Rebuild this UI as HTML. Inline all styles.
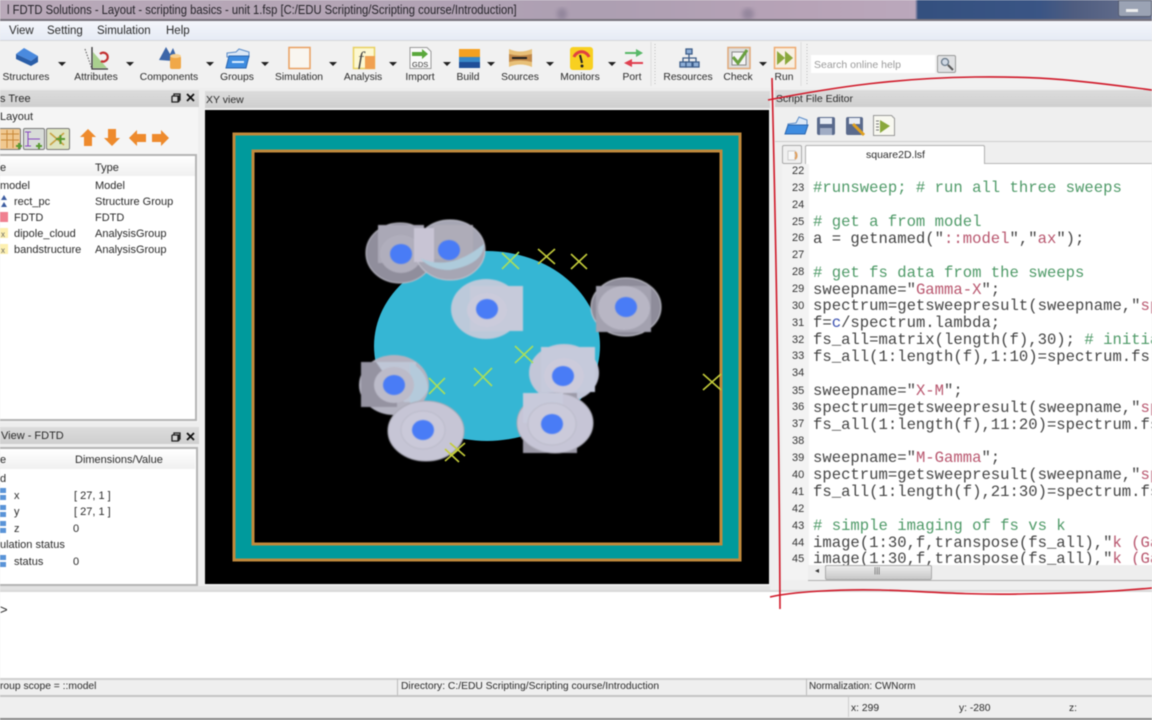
<!DOCTYPE html>
<html><head><meta charset="utf-8"><style>
html,body{margin:0;padding:0;width:1152px;height:720px;overflow:hidden;background:#f0f0f0}
#r{position:relative;width:1152px;height:720px;overflow:hidden;font-family:"Liberation Sans",sans-serif;font-size:11px;color:#2a2a2a;filter:blur(.45px)}
.a{position:absolute}
.t{position:absolute;white-space:nowrap;line-height:14px}
.c{transform:translateX(-50%);font-size:10.300px}
.h{position:absolute;background:linear-gradient(#dcdcdc,#cfcfcf);height:17px}
.l{position:absolute;left:813px;white-space:pre;font-family:"Liberation Mono",monospace;font-size:15.6px;line-height:17px;color:#444}
.n{position:absolute;left:792px;width:13px;font-size:11px;line-height:12px;color:#333}
.g{color:#4f9a68}.s{color:#b8566e}.b{color:#3a50b0}
</style></head><body><div id="r">

<!-- title bar -->
<div class="a" style="left:0;top:0;width:1152px;height:20px;background:linear-gradient(90deg,#b9a9b9 0,#b5a6b6 300px,#ad9fb2 600px,#b7a3b7 800px,#bba8bc 915px,#34507f 918px,#3a5585 1040px,#4f5d80 1075px,#6a7390 1152px)"></div>
<svg class="a" style="left:0;top:0" width="1152" height="20"><defs><filter id="sp"><feGaussianBlur stdDeviation="2.500"/></filter></defs><g fill="#7a7088" opacity=".55" filter="url(#sp)"><ellipse cx="562" cy="14" rx="5" ry="6"/><ellipse cx="748" cy="14" rx="6" ry="6"/></g></svg>
<div class="a" style="left:0;top:19px;width:1152px;height:2px;background:#77727c"></div>
<div class="a" style="left:1118px;top:0;width:34px;height:17px;background:#9ba3b4;border:1px solid #555c70;border-radius:0 0 3px 3px;box-sizing:border-box"></div>
<div class="a" style="left:1126px;top:9px;width:12px;height:3px;background:#eee"></div>
<div class="t" style="left:7px;top:3px;font-size:12.6px;color:#26242a;transform:scaleX(.89);transform-origin:0 0">l FDTD Solutions - Layout - scripting basics - unit 1.fsp [C:/EDU Scripting/Scripting course/Introduction]</div>

<!-- menu -->
<div class="a" style="left:0;top:21px;width:1152px;height:19px;background:linear-gradient(#f4f6fb,#e6ebf5)"></div>
<div class="t" style="left:9px;top:24px;font-size:11.5px">View</div>
<div class="t" style="left:47px;top:24px;font-size:11.5px">Setting</div>
<div class="t" style="left:97px;top:24px;font-size:11.5px">Simulation</div>
<div class="t" style="left:166px;top:24px;font-size:11.5px">Help</div>

<!-- toolbar -->
<div class="a" style="left:0;top:40px;width:1152px;height:48px;background:#f1f1f1;border-top:1px solid #d4d6da;box-sizing:border-box"></div>
<div class="t c" style="left:26px;top:71px">Structures</div>
<div class="t c" style="left:96px;top:71px">Attributes</div>
<div class="t c" style="left:169px;top:71px">Components</div>
<div class="t c" style="left:237px;top:71px">Groups</div>
<div class="t c" style="left:299px;top:71px">Simulation</div>
<div class="t c" style="left:363px;top:71px">Analysis</div>
<div class="t c" style="left:420px;top:71px">Import</div>
<div class="t c" style="left:468px;top:71px">Build</div>
<div class="t c" style="left:520px;top:71px">Sources</div>
<div class="t c" style="left:580px;top:71px">Monitors</div>
<div class="t c" style="left:632px;top:71px">Port</div>
<div class="t c" style="left:688px;top:71px">Resources</div>
<div class="t c" style="left:738px;top:71px">Check</div>
<div class="t c" style="left:784px;top:71px">Run</div>

<svg class="a" style="left:0;top:40px" width="1152" height="50" viewBox="0 40 1152 50">
<g fill="#222"><path d="M58 62h8l-4 4zM126 62h8l-4 4zM206 62h8l-4 4zM261 62h8l-4 4zM329 62h8l-4 4zM389 62h8l-4 4zM443 62h8l-4 4zM487 62h8l-4 4zM546 62h8l-4 4zM608 62h8l-4 4zM759 62h8l-4 4z"/></g>
<!-- structures -->
<path d="M16 54l8-6 14 8-7 5z" fill="#4a8ade"/><path d="M16 54l15 7 7-5v6l-7 4-15-7z" fill="#2a5ea8"/>
<!-- attributes -->
<path d="M92 47v22h16" fill="none" stroke="#333" stroke-width="1.300"/><path d="M93 52l14 16H93z" fill="#a9d08e"/><path d="M85 49l7 20" stroke="#555" stroke-width="1" stroke-dasharray="1.5 1.5"/><path d="M100 54a4.500 4.500 0 1 1 1 7" fill="none" stroke="#c23030" stroke-width="2.200"/>
<!-- components -->
<path d="M159 60l7-13 4 7 3-6 4 10-4 3z" fill="#3c66a8"/><rect x="170" y="56" width="11" height="13" rx="2" fill="#f0a848"/><ellipse cx="175.500" cy="56" rx="5.500" ry="2" fill="#f8d090"/>
<!-- groups folder -->
<path d="M227 53l9-1 3-3 10 3v5h-22z" fill="#dce8f6" stroke="#5b8cc8"/><path d="M229 56h20l-3 12h-20z" fill="#3e8ce0" stroke="#2a66b0"/><path d="M232 62h12" stroke="#d8ecff" stroke-width="2"/>
<!-- simulation -->
<rect x="289" y="47.500" width="21" height="21" fill="#f9f6f0" stroke="#eaa060" stroke-width="1.500"/>
<!-- analysis -->
<rect x="353.500" y="47.500" width="21" height="21" fill="#fdf8d0" stroke="#e8d060" stroke-width="1.500"/><rect x="365" y="56" width="10" height="13" fill="#f0a050"/><text x="358" y="65" font-family="Liberation Serif" font-style="italic" font-size="19" fill="#444">f</text>
<!-- import -->
<path d="M410 47.500h17l4 4v17h-21z" fill="#fafafa" stroke="#999"/><path d="M412 52h10v-3l6 5-6 5v-3h-10z" fill="#5aa83c"/><text x="412" y="67" font-family="Liberation Sans" font-size="7.500" fill="#333">GDS</text>
<!-- build -->
<rect x="459" y="49" width="21" height="8" fill="#f4a020"/><rect x="459" y="57" width="21" height="5" fill="#3888c8"/><rect x="459" y="62" width="21" height="6" fill="#1f4e98"/>
<!-- sources -->
<path d="M509 49q11 5 23 0v18q-12-5-23 0z" fill="#e8c078"/><path d="M509 54q11 3 23 0v8q-12-3-23 0z" fill="#c08848"/><path d="M512 58h15" stroke="#222" stroke-width="2"/>
<!-- monitors -->
<rect x="570" y="47" width="23" height="23" rx="3" fill="#f8d020"/><path d="M574 57a8 8 0 0 1 15 0" fill="none" stroke="#e04040" stroke-width="3"/><path d="M580 55l2 8" stroke="#222" stroke-width="2"/><circle cx="582" cy="66" r="1.500" fill="#222"/>
<!-- port -->
<path d="M625 52h11v-3l7 4-7 4v-3h-11z" fill="#58b868"/><path d="M643 62h-11v-3l-8 4 8 4v-3h11z" fill="#e04050"/>
<!-- resources -->
<g fill="none" stroke="#3c5c88" stroke-width="1.300"><rect x="686" y="49" width="6" height="5" fill="#8fb0d8"/><rect x="680" y="62" width="6" height="5" fill="#8fb0d8"/><rect x="686" y="62" width="6" height="5" fill="#8fb0d8"/><rect x="693" y="62" width="6" height="5" fill="#8fb0d8"/><path d="M689 54v4M683 62v-4h13v4M689 58v4"/></g>
<!-- check -->
<rect x="728" y="47.500" width="22" height="21" fill="#ddd" stroke="#e0a878" stroke-width="1.500"/><rect x="732" y="52" width="14" height="13" fill="#f4f4f4" stroke="#888"/><path d="M733 57l5 6 9-13" fill="none" stroke="#6aa040" stroke-width="3"/>
<!-- run -->
<rect x="774.500" y="47.500" width="21" height="21" fill="#f7f0e2" stroke="#eeaa70" stroke-width="1.500"/><path d="M777 51l8 7-8 7zM785 51l8 7-8 7z" fill="#8aa83c"/>
<!-- separators -->
<path d="M655 44v40M807 44v40" stroke="#bbb" stroke-dasharray="1 2"/><path d="M651 42v44" stroke="#ddd"/><path d="M801 42v44" stroke="#ddd"/>
</svg>

<!-- search -->
<div class="a" style="left:811px;top:55px;width:124px;height:18px;background:#fff"></div>
<div class="t" style="left:814px;top:58px;font-size:10.500px;color:#9a9a9a">Search online help</div>
<div class="a" style="left:937px;top:55px;width:19px;height:18px;box-sizing:border-box;background:#dfe0e2;border:1px solid #9a9a9a;border-radius:2px"></div>
<svg class="a" style="left:937px;top:55px" width="20" height="19"><circle cx="8" cy="7" r="3.500" fill="#cfd8e4" stroke="#6a7a8a" stroke-width="1.300"/><path d="M11 10l5 5" stroke="#555" stroke-width="2"/></svg>

<!-- dock bg -->
<div class="a" style="left:0;top:88px;width:1152px;height:504px;background:#eeeeee"></div>

<!-- left panel top -->
<div class="h" style="left:0;top:90px;width:199px"></div>
<div class="t" style="left:0;top:92px;font-size:11px">s Tree</div>
<div class="a" style="left:0;top:107px;width:198px;height:315px;background:#f5f5f5"></div>
<div class="t" style="left:0;top:110px">Layout</div>
<div class="a" style="left:-4px;top:128px;width:25px;height:22px;box-sizing:border-box;background:#f0c890;border:1px solid #777;border-radius:2px"></div>
<div class="a" style="left:23px;top:128px;width:22px;height:22px;box-sizing:border-box;background:#d8dcd8;border:1px solid #777;border-radius:2px"></div>
<div class="a" style="left:46px;top:128px;width:24px;height:22px;box-sizing:border-box;background:#dfe4c0;border:1px solid #777;border-radius:2px"></div>
<svg class="a" style="left:0;top:126px" width="180" height="26" viewBox="0 126 180 26">
<path d="M1 134h18M1 140h18M7 130v18M13 130v18" stroke="#c88838"/><path d="M16 146h6M19 143v6" stroke="#5a9a30" stroke-width="2"/>
<path d="M28 132v14M28 139h12M25 132h6M25 146h6" stroke="#8848c0"/><path d="M36 146h6M39 143v6" stroke="#5a9a30" stroke-width="2"/>
<path d="M50 133l14 12M64 133l-14 12" stroke="#c8a040" stroke-width="1.500"/><path d="M56 139h9M60.500 135v9" stroke="#5a9a30" stroke-width="2"/>
<g fill="#ee8a2c"><path d="M88 129l8 8h-4v9h-8v-9h-4z"/><path d="M112 146l8-8h-4v-9h-8v9h-4z"/><path d="M129 138l8-8v4h9v8h-9v4z"/><path d="M169 138l-8-8v4h-9v8h9v4z"/></g>
</svg>
<div class="a" style="left:0;top:154px;width:197px;height:267px;background:#fff;border-right:2px solid #b4b4b4;border-top:2px solid #b4b4b4;border-bottom:2px solid #b4b4b4;box-sizing:border-box"></div>
<div class="a" style="left:0;top:156px;width:195px;height:20px;background:linear-gradient(#fff,#f0f0f0)"></div>
<div class="t" style="left:0;top:161px">e</div><div class="t" style="left:95px;top:161px">Type</div>
<div class="t" style="left:0;top:179px">model</div><div class="t" style="left:95px;top:179px">Model</div>
<div class="t" style="left:14px;top:195px">rect_pc</div><div class="t" style="left:95px;top:195px">Structure Group</div>
<div class="t" style="left:14px;top:211px">FDTD</div><div class="t" style="left:95px;top:211px">FDTD</div>
<div class="t" style="left:14px;top:227px">dipole_cloud</div><div class="t" style="left:95px;top:227px">AnalysisGroup</div>
<div class="t" style="left:14px;top:243px">bandstructure</div><div class="t" style="left:95px;top:243px">AnalysisGroup</div>
<svg class="a" style="left:0;top:194px" width="12" height="64" viewBox="0 194 12 64">
<path d="M4 195l3 5H1zM4 202l3 5H1z" fill="#3c5ca0"/><rect x="0" y="212" width="8" height="10" fill="#f08090"/><rect x="0" y="228" width="8" height="10" fill="#fdf0b0"/><rect x="0" y="244" width="8" height="10" fill="#fdf0b0"/><text x="1" y="237" font-size="8" fill="#666">x</text><text x="1" y="253" font-size="8" fill="#666">x</text>
</svg>

<!-- left panel bottom -->
<div class="h" style="left:0;top:427px;width:199px"></div>
<div class="t" style="left:1px;top:429px">View - FDTD</div>
<div class="a" style="left:0;top:447px;width:198px;height:139px;background:#fff;border-right:2px solid #b4b4b4;border-top:2px solid #b4b4b4;border-bottom:2px solid #b4b4b4;box-sizing:border-box"></div>
<div class="a" style="left:0;top:449px;width:195px;height:20px;background:linear-gradient(#fff,#f0f0f0)"></div>
<div class="t" style="left:0;top:453px">e</div><div class="t" style="left:75px;top:453px">Dimensions/Value</div>
<div class="t" style="left:0;top:472px">d</div>
<div class="t" style="left:14px;top:489px">x</div><div class="t" style="left:74px;top:489px">[ 27, 1 ]</div>
<div class="t" style="left:14px;top:505px">y</div><div class="t" style="left:74px;top:505px">[ 27, 1 ]</div>
<div class="t" style="left:14px;top:522px">z</div><div class="t" style="left:73px;top:522px">0</div>
<div class="t" style="left:0;top:538px">ulation status</div>
<div class="t" style="left:14px;top:555px">status</div><div class="t" style="left:73px;top:555px">0</div>
<svg class="a" style="left:0;top:486px" width="8" height="82" viewBox="0 486 8 82"><g fill="#5a94d8"><rect y="488" width="6" height="5"/><rect y="495" width="6" height="5"/><rect y="505" width="6" height="5"/><rect y="512" width="6" height="5"/><rect y="521" width="6" height="5"/><rect y="528" width="6" height="5"/><rect y="555" width="6" height="5"/><rect y="562" width="6" height="5"/></g></svg>

<!-- dock buttons -->
<svg class="a" style="left:0;top:88px" width="770" height="360">
<g fill="none" stroke="#222" stroke-width="1.300"><path d="M172 8h7v6M174 8V6h6v6h-2M172 8v6h6V8"/><path d="M742 8h7v6M744 8V6h6v6h-2M742 8v6h6V8"/><path d="M172 347h7v6M174 347v-2h6v6h-2M172 347v6h6v-6"/></g>
<g stroke="#111" stroke-width="1.800"><path d="M187 6l7 7M194 6l-7 7"/><path d="M757 6l7 7M764 6l-7 7"/><path d="M187 345l7 7M194 345l-7 7"/></g>
</svg>

<!-- XY view -->
<div class="h" style="left:205px;top:91px;width:565px"></div>
<div class="t" style="left:206px;top:93px;font-size:10.500px">XY view</div>
<div class="a" style="left:205px;top:110px;width:564px;height:474px;background:#000"></div>
<svg class="a" style="left:205px;top:110px" width="564" height="474" viewBox="205 110 564 474">
<defs><filter id="bl" x="-5%" y="-5%" width="110%" height="110%"><feGaussianBlur stdDeviation=".6"/></filter></defs>
<rect x="234" y="134" width="506" height="426" fill="#009a9c" stroke="#c08a3c" stroke-width="3"/>
<rect x="253" y="151" width="468" height="393" fill="#000" stroke="#c08a3c" stroke-width="3"/>
<ellipse cx="487" cy="346" rx="113" ry="95" fill="#35b6d4"/>
<g filter="url(#bl)">
 <ellipse cx="400" cy="253" rx="34" ry="30" fill="#908e9c" stroke="#bdbcc8"/><rect x="378" y="225" width="46" height="38" fill="#aaa8b6"/><ellipse cx="401" cy="254" rx="21" ry="19" fill="#b0aebc"/>
 <ellipse cx="450" cy="250" rx="35" ry="30" fill="#a6a6b4" stroke="#c4c4d0"/><rect x="433" y="225" width="40" height="34" fill="#aeacb8"/><path d="M414 228h20v34h-20z" fill="#c8c4d4"/><path d="M420 258q30 14 64-14 0 20-34 26-20 0-30-12z" fill="#aecbdb"/>
 <ellipse cx="486" cy="309" rx="35" ry="30" fill="#bcc9da"/><rect x="470" y="286" width="53" height="45" fill="#c6cada"/><ellipse cx="487" cy="310" rx="20" ry="17" fill="#cbcbdb"/>
 <ellipse cx="626" cy="307" rx="35" ry="29" fill="#8e8c9a" stroke="#c8c8d2"/><rect x="596" y="286" width="55" height="46" fill="#a3a1af"/><ellipse cx="624" cy="308" rx="26" ry="22" fill="#b8b6c4"/>
 <ellipse cx="394" cy="385" rx="35" ry="30" fill="#b3b2c0"/><rect x="361" y="362" width="36" height="45" fill="#9593a1"/><path d="M376 362h40v40h-12z" fill="#bfc6d6"/><path d="M410 362q18 10 18 28-6 12-18 14z" fill="#b4cadb"/><ellipse cx="394" cy="385" rx="20" ry="18" fill="#bcbbc9"/>
 <ellipse cx="564" cy="373" rx="35" ry="29" fill="#c2c6d8"/><rect x="541" y="347" width="54" height="45" fill="#c6cadb"/><ellipse cx="564" cy="376" rx="20" ry="18" fill="#cccbdb"/>
 <ellipse cx="426" cy="431" rx="38" ry="30" fill="#c6c5d5" stroke="#a8a8b4"/><ellipse cx="423" cy="430" rx="22" ry="19" fill="#cac9d9" stroke="#bcbcca"/>
 <rect x="523" y="393" width="54" height="60" fill="#9c9aa8"/><ellipse cx="555" cy="423" rx="38" ry="30" fill="#c6c5d6" stroke="#a8a8b4"/><rect x="523" y="393" width="40" height="30" fill="#c8cadb"/><ellipse cx="552" cy="424" rx="24" ry="21" fill="#cbcada" stroke="#bcbcca"/>
</g>
<g fill="#4a7cf6" filter="url(#bl)"><ellipse cx="401" cy="254" rx="11" ry="10"/><ellipse cx="449" cy="250" rx="11" ry="10"/><ellipse cx="487" cy="309" rx="11" ry="10"/><ellipse cx="626" cy="307" rx="11" ry="10"/><ellipse cx="394" cy="385" rx="11" ry="10"/><ellipse cx="563" cy="376" rx="11" ry="10"/><ellipse cx="423" cy="430" rx="11" ry="10"/><ellipse cx="552" cy="424" rx="11" ry="10"/></g>
<g fill="none" stroke-width="1.600">
<path stroke="#a8de5c" d="M502 269l17-17M502 253l17 16M515 346l18 17M515 363l18-17M474 368l18 18M474 386l18-18M429 378l16 16M429 394l16-16"/>
<path stroke="#c4cc3a" d="M538 249l17 15M538 264l17-15M571 254l16 15M571 269l16-15M703 374l18 16M703 390l18-16M445 449l14 13M445 461l14-12M450 443l15 13M450 456l15-13"/>
</g>
</svg>

<!-- script editor -->
<div class="a" style="left:775px;top:88px;width:377px;height:504px;background:#efefef"></div>
<div class="h" style="left:775px;top:90px;width:377px"></div>
<div class="t" style="left:776px;top:92px;font-size:10.500px">Script File Editor</div>
<svg class="a" style="left:780px;top:112px" width="120" height="28" viewBox="780 112 120 28">
<path d="M788 124l8-1 3-6 8 3v6h-19z" fill="#dce8f6" stroke="#5b8cc8"/><path d="M788 125h20l-3 9h-20z" fill="#3e8ce0" stroke="#2a66b0"/>
<rect x="817" y="117" width="18" height="18" rx="2" fill="#5a6a8c"/><rect x="820" y="118" width="12" height="6" fill="#e8ecf4"/><rect x="820" y="128" width="12" height="7" fill="#a0acc4"/>
<rect x="846" y="117" width="17" height="18" rx="2" fill="#5a6a8c"/><rect x="849" y="118" width="11" height="6" fill="#e8ecf4"/><path d="M853 124l11 11" stroke="#e0a020" stroke-width="3"/>
<path d="M873.500 115.500h18l3 3v17h-21z" fill="#f8f8f0" stroke="#999"/><path d="M880 120l10 6-10 7z" fill="#8aa83c"/><path d="M876 121h3M876 124h3M876 127h3M876 130h3" stroke="#777"/>
</svg>
<div class="a" style="left:775px;top:141px;width:377px;height:1px;background:#cfcfcf"></div>
<div class="a" style="left:782px;top:145px;width:20px;height:19px;box-sizing:border-box;background:#f0f0f0;border:1px solid #aaa;border-radius:2px"></div>
<svg class="a" style="left:782px;top:145px" width="20" height="19"><path d="M6 6h7v9H6z" fill="#f8f8f8" stroke="#ccc"/><path d="M13 7a3 4 0 0 1 0 7" fill="none" stroke="#e0a060" stroke-width="2"/></svg>
<div class="a" style="left:805px;top:145px;width:180px;height:20px;box-sizing:border-box;background:#fff;border:1px solid #b0b0b0;border-bottom:none;border-radius:2px 2px 0 0"></div>
<div class="t" style="left:866px;top:148px;font-size:10.500px">square2D.lsf</div>
<div class="a" style="left:985px;top:163px;width:167px;height:1px;background:#b8b8b8"></div>
<div class="a" style="left:782px;top:164px;width:370px;height:416px;background:#fff"></div>
<div class="a" style="left:782px;top:164px;width:27px;height:416px;background:#f3f3f3"></div>

<div class="a" style="left:0;top:164px;width:1152px;height:401px;overflow:hidden">
<div style="position:absolute;left:0;top:-164px;width:1152px;height:565px">
<div class="n" style="top:165px">22</div>
<div class="n" style="top:182px">23</div><div class="l" style="top:180px"><span class="g">#runsweep; # run all three sweeps</span></div>
<div class="n" style="top:199px">24</div>
<div class="n" style="top:216px">25</div><div class="l" style="top:214px"><span class="g"># get a from model</span></div>
<div class="n" style="top:232px">26</div><div class="l" style="top:231px">a = getnamed("<span class="s">::model</span>","<span class="s">ax</span>");</div>
<div class="n" style="top:249px">27</div>
<div class="n" style="top:266px">28</div><div class="l" style="top:265px"><span class="g"># get fs data from the sweeps</span></div>
<div class="n" style="top:283px">29</div><div class="l" style="top:282px">sweepname="<span class="s">Gamma-X</span>";</div>
<div class="n" style="top:300px">30</div><div class="l" style="top:298px">spectrum=getsweepresult(sweepname,"<span class="s">spectrum</span>");</div>
<div class="n" style="top:317px">31</div><div class="l" style="top:315px">f=<span class="b">c</span>/spectrum.lambda;</div>
<div class="n" style="top:334px">32</div><div class="l" style="top:332px">fs_all=matrix(length(f),30); <span class="g"># initialize</span></div>
<div class="n" style="top:350px">33</div><div class="l" style="top:349px">fs_all(1:length(f),1:10)=spectrum.fs;</div>
<div class="n" style="top:367px">34</div>
<div class="n" style="top:385px">35</div><div class="l" style="top:383px">sweepname="<span class="s">X-M</span>";</div>
<div class="n" style="top:401px">36</div><div class="l" style="top:400px">spectrum=getsweepresult(sweepname,"<span class="s">spectrum</span>");</div>
<div class="n" style="top:418px">37</div><div class="l" style="top:417px">fs_all(1:length(f),11:20)=spectrum.fs;</div>
<div class="n" style="top:435px">38</div>
<div class="n" style="top:452px">39</div><div class="l" style="top:450px">sweepname="<span class="s">M-Gamma</span>";</div>
<div class="n" style="top:469px">40</div><div class="l" style="top:467px">spectrum=getsweepresult(sweepname,"<span class="s">spectrum</span>");</div>
<div class="n" style="top:486px">41</div><div class="l" style="top:484px">fs_all(1:length(f),21:30)=spectrum.fs;</div>
<div class="n" style="top:503px">42</div>
<div class="n" style="top:520px">43</div><div class="l" style="top:518px"><span class="g"># simple imaging of fs vs k</span></div>
<div class="n" style="top:537px">44</div><div class="l" style="top:535px">image(1:30,f,transpose(fs_all),"<span class="s">k (Gamma)</span>");</div>
<div class="n" style="top:553px">45</div><div class="l" style="top:551px">image(1:30,f,transpose(fs_all),"<span class="s">k (Gamma)</span>");</div>
</div></div>

<!-- editor scrollbar -->
<div class="a" style="left:808px;top:565px;width:344px;height:15px;background:#eeeeee;border-bottom:1px solid #b0b0b0;box-sizing:content-box"></div>
<div class="a" style="left:825px;top:565px;width:107px;height:15px;box-sizing:border-box;background:linear-gradient(#ececec,#c8c8c8);border:1px solid #aaa;border-radius:2px"></div>
<div class="t" style="left:874px;top:564px;font-size:8px;color:#555">|||</div>
<div class="t" style="left:815px;top:564px;font-size:8px;color:#333">◂</div>

<!-- console -->
<div class="a" style="left:0;top:586px;width:770px;height:6px;background:#e2e2e2"></div>
<div class="a" style="left:0;top:592px;width:1152px;height:86px;background:#fff"></div>
<div class="a" style="left:0;top:590px;width:1152px;height:2px;background:#d9d9d9"></div>
<div class="t" style="left:0;top:603px;font-size:13px;color:#222">&gt;</div>

<!-- status -->
<div class="a" style="left:0;top:678px;width:1152px;height:42px;background:#efefef"></div>
<div class="a" style="left:0;top:678px;width:1152px;height:2px;background:#cfcfcf"></div>
<div class="a" style="left:0;top:695px;width:1152px;height:2px;background:#c4c4c4"></div>
<div class="a" style="left:397px;top:679px;width:1px;height:16px;background:#bbb"></div>
<div class="a" style="left:806px;top:679px;width:1px;height:16px;background:#bbb"></div>
<div class="a" style="left:848px;top:697px;width:1px;height:20px;background:#ccc"></div>
<div class="t" style="left:0;top:680px;font-size:10.300px">roup scope = ::model</div>
<div class="t" style="left:401px;top:680px;font-size:10.300px">Directory: C:/EDU Scripting/Scripting course/Introduction</div>
<div class="t" style="left:809px;top:680px;font-size:9.900px">Normalization: CWNorm</div>
<div class="t" style="left:851px;top:702px;font-size:10.300px">x: 299</div>
<div class="t" style="left:959px;top:702px;font-size:10.300px">y: -280</div>
<div class="t" style="left:1069px;top:702px;font-size:10.300px">z:</div>
<div class="a" style="left:0;top:718px;width:1152px;height:2px;background:#8a8a8a"></div>

<!-- red annotation -->
<svg class="a" style="left:0;top:0" width="1152" height="720">
<g fill="none" stroke="#d01828" stroke-width="1.600">
<path d="M772 78C775 200 779 400 780 609"/>
<path d="M768 100C840 86 900 78 975 77S1090 82 1152 90"/>
<path d="M770 597C790 592 840 589 880 590S960 595 1020 594S1110 592 1152 588"/>
</g>
</svg>
</div></body></html>
